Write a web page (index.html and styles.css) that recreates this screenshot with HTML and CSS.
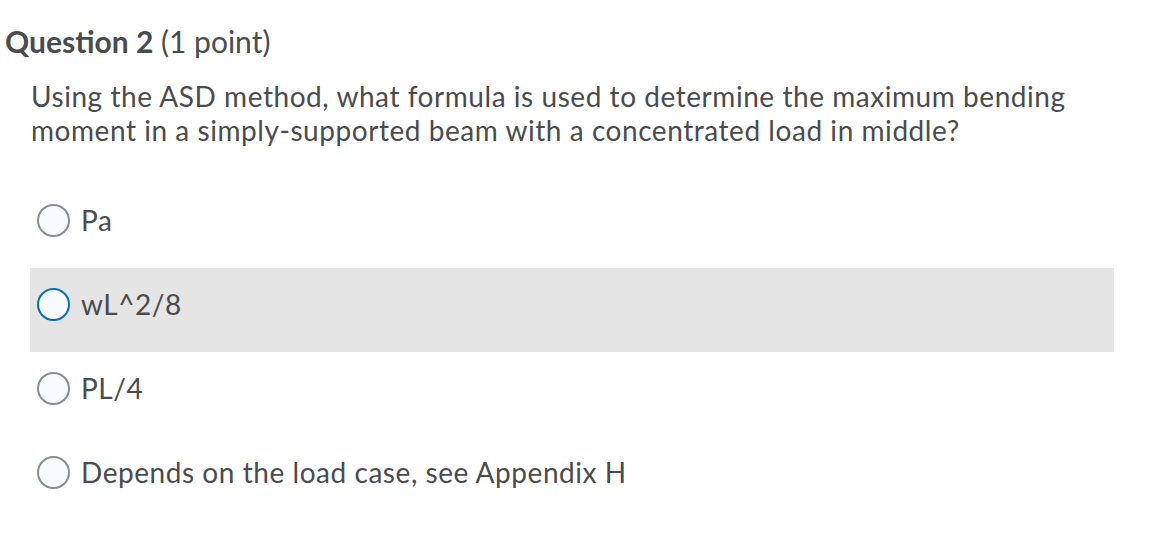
FILE: index.html
```html
<!DOCTYPE html>
<html>
<head>
<meta charset="utf-8">
<link rel="stylesheet" href="styles.css">
</head>
<body>
<div class="page">
  <h2 class="q-title"><span class="q-bold">Question 2</span> (1 point)</h2>
  <p class="q-text">Using the ASD method, what formula is used to determine the maximum bending moment in a simply-supported beam with a concentrated load in middle?</p>
  <div class="options">
    <div class="opt"><span class="radio"></span><span class="label">Pa</span></div>
    <div class="opt hover"><span class="radio focus"></span><span class="label">wL^2/8</span></div>
    <div class="opt"><span class="radio"></span><span class="label">PL/4</span></div>
    <div class="opt"><span class="radio"></span><span class="label">Depends on the load case, see Appendix H</span></div>
  </div>
</div>
</body>
</html>
```
FILE: styles.css
```css
html, body {
  margin: 0;
  padding: 0;
  background: #ffffff;
}
body {
  font-family: Lato, "Noto Sans", sans-serif;
  color: #494c4e;
}
.page {
  padding: 23px 0 0 5px;
}
.q-title {
  margin: 0;
  font-size: 30px;
  font-weight: 400;
  line-height: 36px;
}
.q-bold {
  font-weight: 700;
}
.q-text {
  margin: 20px 0 0 26px;
  width: 1070px;
  font-size: 28px;
  letter-spacing: 0.55px;
  line-height: 34px;
}
.options {
  margin: 37px 0 0 25px;
  width: 1084px;
}
.opt {
  height: 84px;
  box-sizing: border-box;
  display: flex;
  align-items: flex-start;
  padding: 20px 0 0 7px;
  gap: 11px;
  font-size: 28px;
  letter-spacing: 0.55px;
}
.opt.hover {
  background: #e5e5e5;
}
.radio {
  width: 29px;
  height: 29px;
  border: 2px solid #8a8d8f;
  border-radius: 50%;
  background: #f9fafd;
  flex: none;
}
.radio.focus {
  border-color: #006fbf;
}
.label {
  line-height: 33px;
}
```
